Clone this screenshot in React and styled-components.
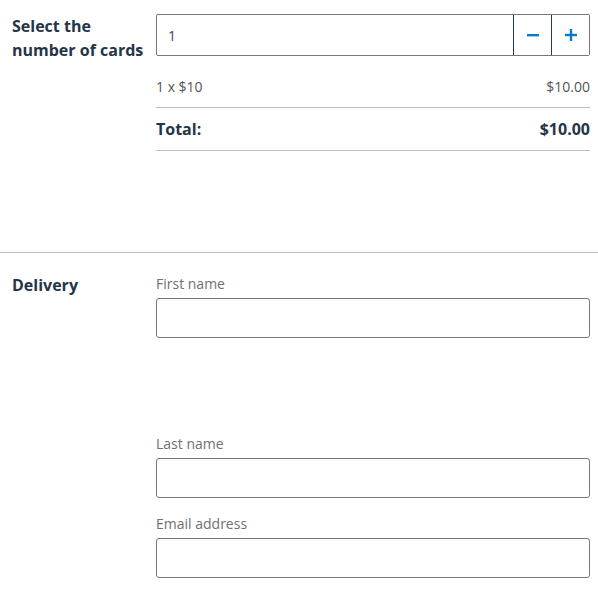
import React from "react";
import styled, { createGlobalStyle } from "styled-components";

const Global = createGlobalStyle`
  html, body { margin: 0; padding: 0; background: #fff; }
  body { font-family: "Open Sans", "Noto Sans", sans-serif; color: #253547; }
  * { box-sizing: border-box; }
`;

const Page = styled.div`
  width: 598px;
`;

const Section = styled.section`
  display: grid;
  grid-template-columns: 156px 1fr;
  padding: ${(p) => p.$pad};
  border-bottom: ${(p) => (p.$divider ? "1px solid #bdbdbd" : "none")};
`;

const SectionTitle = styled.h2`
  margin: 0;
  padding-left: 12px;
  font-size: 16px;
  font-weight: 700;
  line-height: 24px;
  color: #253547;
`;

const Content = styled.div`
  display: flex;
  flex-direction: column;
`;

const Stepper = styled.div`
  display: flex;
  height: 42px;
  border: 1px solid #777;
  border-radius: 2px;
`;

const StepInput = styled.input`
  flex: 1;
  min-width: 0;
  border: none;
  outline: none;
  padding: 0 11px;
  font-family: inherit;
  font-size: 14px;
  color: #4a3b78;
  background: transparent;
`;

const StepButton = styled.button`
  width: 38px;
  border: none;
  border-left: 1px solid #2b3a4a;
  background: #fff;
  display: flex;
  align-items: center;
  justify-content: center;
  padding: 0;
  cursor: pointer;
`;

const SummaryRow = styled.div`
  display: flex;
  justify-content: space-between;
  align-items: center;
  height: ${(p) => p.$h};
  border-bottom: 1px solid #bdbdbd;
  font-size: ${(p) => (p.$bold ? "16px" : "14px")};
  font-weight: ${(p) => (p.$bold ? 700 : 400)};
  color: ${(p) => (p.$bold ? "#253547" : "#555")};
  padding-top: ${(p) => p.$pt || "0px"};
`;

const Field = styled.div`
  display: flex;
  flex-direction: column;
  margin-bottom: ${(p) => p.$mb};
`;

const FieldLabel = styled.label`
  font-size: 14px;
  line-height: 22px;
  color: #707070;
  margin-bottom: 3px;
`;

const TextInput = styled.input`
  height: 40px;
  border: 1px solid #777;
  border-radius: 3px;
  padding: 0 11px;
  font-family: inherit;
  font-size: 14px;
  outline: none;
`;

const Minus = () => (
  <svg width="12" height="12" viewBox="0 0 12 12">
    <rect x="0" y="5" width="12" height="2.4" fill="#0a78cc" />
  </svg>
);

const Plus = () => (
  <svg width="12" height="12" viewBox="0 0 12 12">
    <rect x="0" y="4.8" width="12" height="2.4" fill="#0a78cc" />
    <rect x="4.8" y="0" width="2.4" height="12" fill="#0a78cc" />
  </svg>
);

export default function App() {
  return (
    <Page>
      <Global />
      <Section $pad="14px 8px 101px 0" $divider>
        <SectionTitle>Select the number of cards</SectionTitle>
        <Content>
          <Stepper>
            <StepInput defaultValue="1" />
            <StepButton aria-label="Decrease"><Minus /></StepButton>
            <StepButton aria-label="Increase"><Plus /></StepButton>
          </Stepper>
          <SummaryRow $h="52px" $pt="10px">
            <span>1 x $10</span>
            <span>$10.00</span>
          </SummaryRow>
          <SummaryRow $h="43px" $bold>
            <span>Total:</span>
            <span>$10.00</span>
          </SummaryRow>
        </Content>
      </Section>
      <Section $pad="20px 8px 12px 0">
        <SectionTitle>Delivery</SectionTitle>
        <Content>
          <Field $mb="95px">
            <FieldLabel>First name</FieldLabel>
            <TextInput />
          </Field>
          <Field $mb="15px">
            <FieldLabel>Last name</FieldLabel>
            <TextInput />
          </Field>
          <Field $mb="0px">
            <FieldLabel>Email address</FieldLabel>
            <TextInput />
          </Field>
        </Content>
      </Section>
    </Page>
  );
}
